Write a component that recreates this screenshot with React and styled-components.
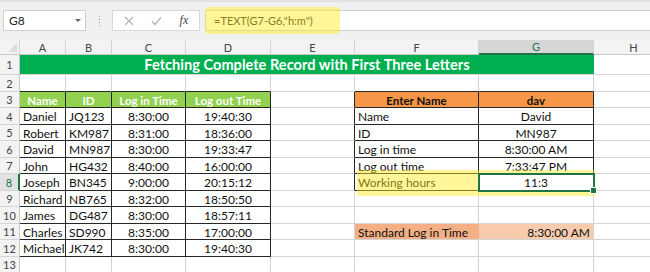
import React from 'react';
import styled, { createGlobalStyle } from 'styled-components';

const GlobalStyle = createGlobalStyle`
  html, body {
    margin: 0;
    padding: 0;
    background: #ffffff;
    overflow: hidden;
  }
  body {
    font-family: "Lato", "Open Sans", sans-serif;
  }
`;

const Page = styled.div`
  width: 650px;
  height: 272px;
  overflow: hidden;
  background: #ffffff;
`;

const Toolbar = styled.div`
  position: relative;
  height: 40px;
  background: #f0f0f0;
  border-top: 2px solid #e3e3e3;
  box-sizing: border-box;
  display: flex;
  align-items: flex-start;
  padding: 8px 0 0 3px;
`;

const NameBox = styled.div`
  width: 83px;
  height: 21px;
  box-sizing: border-box;
  background: #fff;
  border: 1px solid #d0d0d0;
  display: flex;
  align-items: center;
  justify-content: space-between;
  padding: 0 4px 0 5px;
  font-size: 12px;
  color: #222;
`;

const Caret = styled.span`
  width: 0;
  height: 0;
  border-left: 3px solid transparent;
  border-right: 3px solid transparent;
  border-top: 3px solid #666;
`;

const Dots = styled.div`
  width: 26px;
  height: 21px;
  display: flex;
  flex-direction: column;
  align-items: center;
  justify-content: center;
  gap: 2px;
  span {
    width: 1px;
    height: 1px;
    background: #9a9a9a;
  }
`;

const FuncBox = styled.div`
  width: 88px;
  height: 21px;
  box-sizing: border-box;
  background: #fff;
  border: 1px solid #d9d9d9;
  display: flex;
  align-items: center;
  justify-content: space-around;
  padding: 0 2px;
  color: #b0b0b0;
  font-size: 12px;
`;

const Fx = styled.span`
  font-family: "Liberation Serif", serif;
  font-style: italic;
  color: #444;
  font-size: 12px;
`;

const Formula = styled.div`
  flex: 1;
  margin-left: 5px;
  height: 21px;
  box-sizing: border-box;
  background: #fff;
  border: 1px solid #d0d0d0;
  border-right: none;
  display: flex;
  align-items: center;
  padding-left: 8px;
  font-size: 11px;
  color: #222;
`;

const Marker = styled.div`
  position: absolute;
  left: ${p => p.$x}px;
  top: ${p => p.$y}px;
  width: ${p => p.$w}px;
  height: ${p => p.$h}px;
  border-radius: ${p => p.$r || 0}px;
  background: rgba(255, 236, 30, 0.45);
  pointer-events: none;
`;

const SheetWrap = styled.div`
  position: relative;
`;

const Sheet = styled.div`
  display: grid;
  grid-template-columns: 20px 46px 46px 74px 85px 84px 124px 115px 80px;
  grid-template-rows: 15px 20px 17px 16px 17px 16px 17px 16px 17px 16px 17px 16px 17px 16px;
  font-size: 12px;
  color: #111;
`;

const Corner = styled.div`
  position: relative;
  background: #f3f3f3;
  border-right: 1px solid #d4d4d4;
  border-bottom: 1px solid #c8c8c8;
  &::after {
    content: '';
    position: absolute;
    right: 2px;
    bottom: 2px;
    border-left: 9px solid transparent;
    border-bottom: 9px solid #dcdcdc;
  }
`;

const ColHead = styled.div`
  box-sizing: border-box;
  background: ${p => (p.$active ? '#d6d6d6' : '#f3f3f3')};
  color: ${p => (p.$active ? '#217346' : '#444')};
  border-right: 1px solid #d4d4d4;
  border-bottom: ${p => (p.$active ? '2px solid #217346' : '1px solid #c8c8c8')};
  display: flex;
  align-items: center;
  justify-content: center;
  font-size: 11px;
`;

const RowHead = styled.div`
  box-sizing: border-box;
  background: ${p => (p.$active ? '#e1e1e1' : '#f3f3f3')};
  color: ${p => (p.$active ? '#217346' : '#444')};
  border-right: ${p => (p.$active ? '2px solid #217346' : '1px solid #c8c8c8')};
  border-bottom: 1px solid #d4d4d4;
  display: flex;
  align-items: center;
  justify-content: center;
  font-size: 11px;
`;

const Title = styled.div`
  grid-column: 2 / 9;
  background: #00b050;
  color: #fff;
  font-weight: 700;
  font-size: 14.6px;
  display: flex;
  align-items: center;
  justify-content: center;
  border-bottom: 1px solid #d4d4d4;
`;

const Cell = styled.div`
  position: relative;
  box-sizing: border-box;
  background: ${p => p.$bg || '#fff'};
  color: ${p => p.$color || '#111'};
  font-weight: ${p => (p.$bold ? 700 : 400)};
  font-size: ${p => (p.$bold ? '11.5px' : '12px')};
  border-right: 1px solid ${p => p.$right || '#d4d4d4'};
  border-bottom: 1px solid ${p => p.$bottom || '#d4d4d4'};
  display: flex;
  align-items: center;
  justify-content: ${p => p.$align || 'flex-start'};
  padding: 1px 3px 0;
  white-space: nowrap;
  overflow: visible;
  ${p =>
    p.$selected &&
    `
    outline: 2px solid #217346;
    outline-offset: -1px;
    z-index: 2;
    &::after {
      content: '';
      position: absolute;
      right: -4px;
      bottom: -4px;
      width: 5px;
      height: 5px;
      background: #217346;
      border: 1px solid #fff;
    }
  `}
`;

const dark = '#262626';

const records = [
  ['Daniel', 'JQ123', '8:30:00', '19:40:30'],
  ['Robert', 'KM987', '8:31:00', '18:36:00'],
  ['David', 'MN987', '8:30:00', '19:33:47'],
  ['John', 'HG432', '8:40:00', '16:00:00'],
  ['Joseph', 'BN345', '9:00:00', '20:15:12'],
  ['Richard', 'NB765', '8:32:00', '18:50:50'],
  ['James', 'DG487', '8:30:00', '18:57:11'],
  ['Charles', 'SD990', '8:35:00', '17:00:00'],
  ['Michael', 'JK742', '8:30:00', '19:40:30'],
];

const lookup = [
  ['Name', 'David'],
  ['ID', 'MN987'],
  ['Log in time', '8:30:00 AM'],
  ['Log out time', '7:33:47 PM'],
  ['Working hours', '11:3'],
];

const columns = ['A', 'B', 'C', 'D', 'E', 'F', 'G', 'H'];

function renderRow(r) {
  const cells = [<RowHead key="h" $active={r === 8}>{r}</RowHead>];
  const rec = r >= 4 && r <= 12 ? records[r - 4] : null;
  const look = r >= 4 && r <= 8 ? lookup[r - 4] : null;

  // A-D: records table
  if (r === 3) {
    ['Name', 'ID', 'Log in Time', 'Log out Time'].forEach((t, i) =>
      cells.push(
        <Cell key={i} $bg="#92d050" $color="#fff" $bold $align="center" $right={dark} $bottom={dark}>
          {t}
        </Cell>
      )
    );
  } else if (rec) {
    rec.forEach((t, i) =>
      cells.push(
        <Cell key={i} $align={i < 2 ? 'flex-start' : 'center'} $right={dark} $bottom={dark}>
          {t}
        </Cell>
      )
    );
  } else {
    for (let i = 0; i < 4; i++) cells.push(<Cell key={i} $bottom={r === 2 ? dark : undefined} />);
  }

  // E
  cells.push(<Cell key="e" $right={r >= 3 && r <= 8 ? dark : undefined} />);

  // F-G: lookup table
  if (r === 3) {
    cells.push(<Cell key="f" $bg="#f79646" $bold $align="center" $right={dark} $bottom={dark}>Enter Name</Cell>);
    cells.push(<Cell key="g" $bg="#f79646" $bold $align="center" $right={dark} $bottom={dark}>dav</Cell>);
  } else if (look) {
    cells.push(<Cell key="f" $right={dark} $bottom={dark}>{look[0]}</Cell>);
    cells.push(
      <Cell key="g" $align="center" $right={dark} $bottom={dark} $selected={r === 8}>
        {look[1]}
      </Cell>
    );
  } else if (r === 11) {
    cells.push(<Cell key="f" $bg="#f4b084" $right="#f4b084">Standard Log in Time</Cell>);
    cells.push(<Cell key="g" $bg="#f8cbad" $align="flex-end">8:30:00 AM</Cell>);
  } else {
    cells.push(<Cell key="f" $bottom={r === 2 ? dark : undefined} />);
    cells.push(<Cell key="g" $bottom={r === 2 ? dark : undefined} />);
  }

  cells.push(<Cell key="h" />);
  return cells;
}

export default function App() {
  const rows = [];
  for (let r = 2; r <= 13; r++) rows.push(...renderRow(r));

  return (
    <Page>
      <GlobalStyle />
      <Toolbar>
        <NameBox>
          G8
          <Caret />
        </NameBox>
        <Dots>
          <span />
          <span />
          <span />
          <span />
        </Dots>
        <FuncBox>
          <svg width="10" height="10" viewBox="0 0 10 10">
            <path d="M1 1 L9 9 M9 1 L1 9" stroke="#b4b4b4" strokeWidth="1.2" />
          </svg>
          <svg width="11" height="10" viewBox="0 0 11 10">
            <path d="M1 5.5 L4 8.5 L10 1.5" stroke="#b4b4b4" strokeWidth="1.3" fill="none" />
          </svg>
          <Fx>fx</Fx>
        </FuncBox>
        <Formula>=TEXT(G7-G6,"h:m")</Formula>
        <Marker $x={205} $y={5} $w={135} $h={27} $r={4} />
      </Toolbar>
      <SheetWrap>
        <Sheet>
          <Corner />
          {columns.map(c => (
            <ColHead key={c} $active={c === 'G'}>
              {c}
            </ColHead>
          ))}
          <RowHead>1</RowHead>
          <Title>Fetching Complete Record with First Three Letters</Title>
          <Cell />
          {rows}
        </Sheet>
        <Marker $x={357} $y={130} $w={238} $h={26} />
      </SheetWrap>
    </Page>
  );
}
